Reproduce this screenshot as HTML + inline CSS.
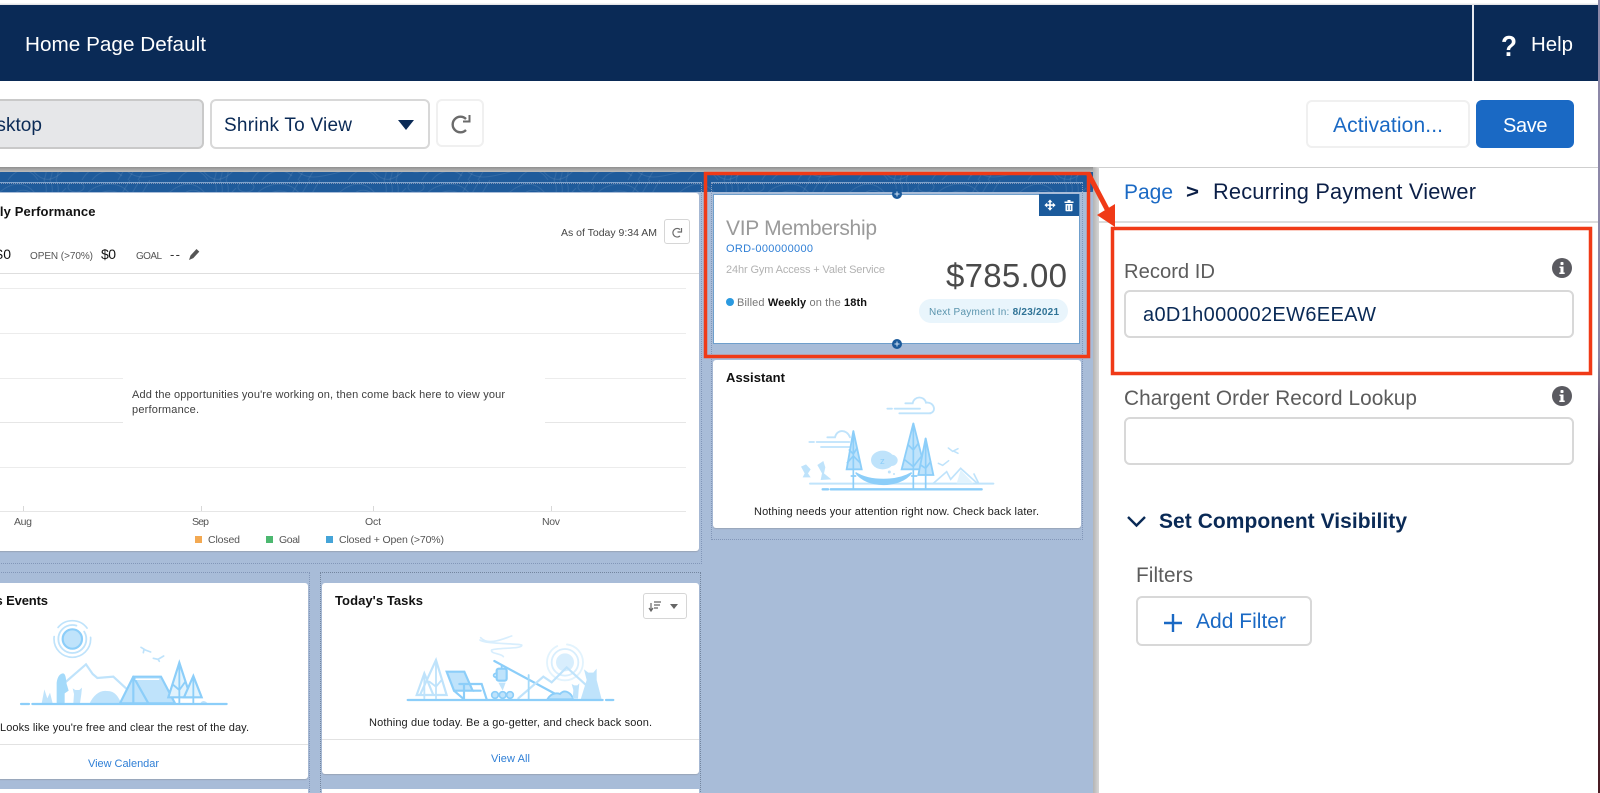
<!DOCTYPE html>
<html lang="en">
<head>
<meta charset="utf-8">
<title>Home Page Default</title>
<style>
html,body{margin:0;padding:0;background:#fff;width:1600px;height:793px;overflow:hidden}
#page{position:relative;width:1600px;height:793px;overflow:hidden;font-family:"Liberation Sans",sans-serif;filter:blur(.3px)}
.b{position:absolute;box-sizing:border-box}
svg{position:absolute;left:0;top:0}
text{font-family:"Liberation Sans",sans-serif}
.n{fill:#0a2a56}.bl{fill:#1a69c4}.g{fill:#5c5c5c}.lk{fill:#2f7fd6}.d{fill:#3f3f3f}.k{fill:#111}
.t{font-weight:700;font-size:13px;fill:#111}
</style>
</head>
<body>
<div id="page">
<!-- chrome -->
<div class="b" style="left:0;top:0;width:1600px;height:5px;background:linear-gradient(#fff 55%,#dcdde0)"></div>
<div class="b" style="left:0;top:5px;width:1598px;height:76px;background:#0a2a56"></div>
<div class="b" style="left:1472px;top:5px;width:2px;height:76px;background:#e6e9ef"></div>

<!-- toolbar -->
<div class="b" style="left:-20px;top:99px;width:224px;height:50px;background:#e6e7e9;border:2px solid #c9c9c9;border-radius:6px"></div>
<div class="b" style="left:210px;top:99px;width:220px;height:50px;background:#fff;border:2px solid #d8d8d8;border-radius:6px"></div>
<div class="b" style="left:436px;top:99px;width:48px;height:48px;background:#fff;border:2px solid #f0f0f0;border-radius:6px"></div>
<div class="b" style="left:1306px;top:100px;width:164px;height:48px;background:#fff;border:2px solid #f0f0f0;border-radius:6px"></div>
<div class="b" style="left:1476px;top:100px;width:98px;height:48px;background:#1a69c4;border-radius:6px"></div>

<!-- canvas -->
<div class="b" style="left:0;top:167px;width:1099px;height:626px;background:#a8bcd8"></div>
<div class="b" style="left:0;top:167px;width:1099px;height:5px;background:linear-gradient(#8f8f8f,#bdbdbd)"></div>
<div class="b" style="left:1093px;top:167px;width:6px;height:626px;background:linear-gradient(90deg,#b4b4b4,#d6d6d6)"></div>
<div class="b" style="left:0;top:172px;width:1093px;height:20px;background:#1f5b9b"></div>

<!-- dotted region outlines -->
<div class="b" style="left:-4px;top:183px;width:706px;height:381px;border:1px dotted #8296b8"></div>
<div class="b" style="left:711px;top:183px;width:372px;height:357px;border:1px dotted #8296b8"></div>
<div class="b" style="left:-4px;top:572px;width:314px;height:240px;border:1px dotted #8296b8"></div>
<div class="b" style="left:320px;top:572px;width:381px;height:240px;border:1px dotted #74869f"></div>

<!-- cards -->
<div class="b" style="left:-4px;top:193px;width:703px;height:358px;background:#fff;border-radius:3px;box-shadow:0 1px 1px #98a4b8"></div>
<div class="b" style="left:664px;top:219px;width:26px;height:25px;background:#fff;border:1px solid #d6d6d6;border-radius:3px"></div>
<div class="b" style="left:0;top:273px;width:699px;height:1px;background:#dedede"></div>
<div class="b" style="left:0;top:288px;width:686px;height:1px;background:#ececec"></div>
<div class="b" style="left:0;top:333px;width:686px;height:1px;background:#ececec"></div>
<div class="b" style="left:0;top:378px;width:123px;height:1px;background:#ececec"></div>
<div class="b" style="left:545px;top:378px;width:141px;height:1px;background:#ececec"></div>
<div class="b" style="left:0;top:422px;width:123px;height:1px;background:#e6e6e6"></div>
<div class="b" style="left:545px;top:422px;width:141px;height:1px;background:#e6e6e6"></div>
<div class="b" style="left:0;top:467px;width:686px;height:1px;background:#ececec"></div>
<div class="b" style="left:0;top:511px;width:686px;height:1px;background:#e6e6e6"></div>
<div class="b" style="left:23px;top:506px;width:1px;height:5px;background:#d8d8d8"></div>
<div class="b" style="left:201px;top:506px;width:1px;height:5px;background:#d8d8d8"></div>
<div class="b" style="left:373px;top:506px;width:1px;height:5px;background:#d8d8d8"></div>
<div class="b" style="left:551px;top:506px;width:1px;height:5px;background:#d8d8d8"></div>
<div class="b" style="left:195px;top:536px;width:7px;height:7px;background:#f3a952"></div>
<div class="b" style="left:266px;top:536px;width:7px;height:7px;background:#4cb870"></div>
<div class="b" style="left:326px;top:536px;width:7px;height:7px;background:#45a4d8"></div>

<div class="b" style="left:-4px;top:583px;width:312px;height:196px;background:#fff;border-radius:3px;box-shadow:0 1px 1px #98a4b8"></div>
<div class="b" style="left:0;top:744px;width:308px;height:1px;background:#e2e2e2"></div>
<div class="b" style="left:322px;top:583px;width:377px;height:191px;background:#fff;border-radius:3px;box-shadow:0 1px 1px #98a4b8"></div>
<div class="b" style="left:322px;top:739px;width:377px;height:1px;background:#e2e2e2"></div>
<div class="b" style="left:643px;top:593px;width:44px;height:26px;background:#fff;border:1px solid #d6d6d6;border-radius:3px"></div>
<div class="b" style="left:-4px;top:789px;width:312px;height:8px;background:#fff"></div>
<div class="b" style="left:322px;top:789px;width:377px;height:8px;background:#fff"></div>

<div class="b" style="left:713px;top:360px;width:368px;height:168px;background:#fff;border-radius:3px;box-shadow:0 1px 1px #98a4b8"></div>

<div class="b" style="left:713px;top:194px;width:367px;height:150px;background:#fff;border:1.5px solid #6f9fcc"></div>
<div class="b" style="left:1039px;top:194px;width:40px;height:22px;background:#1b5a9b"></div>
<div class="b" style="left:919px;top:299px;width:149px;height:24px;background:#e9f5fc;border-radius:12px"></div>
<div class="b" style="left:726px;top:298px;width:8px;height:8px;background:#2b9ae0;border-radius:50%"></div>

<!-- right panel -->
<div class="b" style="left:1099px;top:167px;width:499px;height:626px;background:#fff"></div>
<div class="b" style="left:1099px;top:167px;width:499px;height:1px;background:#cfcfcf"></div>
<div class="b" style="left:1099px;top:221px;width:499px;height:2px;background:#dddddd"></div>
<div class="b" style="left:1124px;top:290px;width:450px;height:48px;background:#fff;border:2px solid #d8d8d8;border-radius:6px"></div>
<div class="b" style="left:1124px;top:417px;width:450px;height:48px;background:#fff;border:2px solid #d8d8d8;border-radius:6px"></div>
<div class="b" style="left:1136px;top:596px;width:176px;height:50px;background:#fff;border:2px solid #d8d8d8;border-radius:6px"></div>
<div class="b" style="left:1552px;top:258px;width:20px;height:20px;background:#5a5a60;border-radius:50%"></div>
<div class="b" style="left:1552px;top:386px;width:20px;height:20px;background:#5a5a60;border-radius:50%"></div>
<div class="b" style="left:1598px;top:0;width:2px;height:793px;background:linear-gradient(#8d88a8 0,#8d88a8 45%,#3a2030 60%,#4a1c24 100%)"></div>

<svg width="1600" height="793" viewBox="0 0 1600 793" xmlns="http://www.w3.org/2000/svg">
<defs>
<pattern id="topo" width="170" height="20" patternUnits="userSpaceOnUse">
<g fill="none" stroke="#fff" stroke-opacity=".09" stroke-width="1">
<path d="M0 12C14 0 26 3 34 12S52 24 66 8"/>
<path d="M8 20C18 6 30 8 38 20"/>
<path d="M44 0c3 6 3 13 0 20M50 0c3 6 3 13 0 20M56 0c3 6 3 13 0 20"/>
<path d="M82 20C92 2 116 0 126 10s22 8 44 2"/>
<path d="M92 20c8-10 22-12 30-4"/>
<path d="M130 0l-12 20M140 0l-12 20M150 0l-12 20"/>
<ellipse cx="76" cy="7" rx="8" ry="5"/>
</g>
</pattern>
</defs>

<rect x="0" y="172" width="1093" height="20" fill="url(#topo)"/>
<rect x="0" y="182" width="702" height="1" fill="#7fa3cc"/>
<rect x="711" y="182" width="372" height="1" fill="#7fa3cc"/>

<!-- header text -->
<text x="25" y="51" font-size="20.7" fill="#fff" textLength="181">Home Page Default</text>
<text x="1501" y="56" font-size="29" font-weight="700" fill="#fff" textLength="16" lengthAdjust="spacingAndGlyphs">?</text>
<text x="1531" y="51" font-size="20.4" fill="#fff" textLength="42">Help</text>

<!-- toolbar text -->
<text x="-28" y="131" font-size="19" class="n" textLength="70">Desktop</text>
<text x="224" y="131" font-size="19" class="n" textLength="128">Shrink To View</text>
<path d="M398 120h16l-8 10z" fill="#0a2a56"/>
<g fill="none" stroke="#6b6b6b">
<path d="M466 119A7.800 7.800 0 1 0 466 130" stroke-width="2.400"/>
<path d="M469.500 115V121.500H463" stroke-width="2"/>
</g>
<text x="1333" y="132" font-size="21" class="bl" textLength="110">Activation...</text>
<text x="1503" y="132" font-size="20" fill="#fff" textLength="44.5">Save</text>

<!-- performance card -->
<text x="-48" y="216" class="t" textLength="143.5">Quarterly Performance</text>
<text x="561" y="236" font-size="10.5" fill="#444" textLength="96">As of Today 9:34 AM</text>
<g fill="none" stroke="#6b6b6b" stroke-width="1.200">
<path d="M680 229.500A4.300 4.300 0 1 0 680 236"/>
<path d="M681.500 228v4h-4"/>
</g>
<text x="-5" y="259" font-size="14" class="k" textLength="16">$0</text>
<text x="30" y="259" font-size="10" fill="#555" textLength="63">OPEN (&gt;70%)</text>
<text x="101" y="259" font-size="14" class="k" textLength="15">$0</text>
<text x="136" y="259" font-size="10" fill="#555" textLength="26">GOAL</text>
<text x="170" y="259" font-size="13" fill="#333" textLength="10">--</text>
<path d="M189 260l1.500-4.500 6-6.500 2.800 2.600-6 6.500z" fill="#555"/>
<text x="132" y="398" font-size="11" class="d" textLength="373">Add the opportunities you're working on, then come back here to view your</text>
<text x="132" y="413" font-size="11" class="d" textLength="67">performance.</text>
<g font-size="10.5" fill="#555">
<text x="14" y="525" textLength="18">Aug</text>
<text x="192" y="525" textLength="17">Sep</text>
<text x="365" y="525" textLength="16">Oct</text>
<text x="542" y="525" textLength="18">Nov</text>
<text x="208" y="543" textLength="32">Closed</text>
<text x="279" y="543" textLength="21">Goal</text>
<text x="339" y="543" textLength="105">Closed + Open (&gt;70%)</text>
</g>

<!-- VIP card -->
<text x="726" y="235" font-size="21" fill="#9a9a9a" textLength="151">VIP Membership</text>
<text x="726" y="252" font-size="11" class="lk" textLength="87">ORD-000000000</text>
<text x="726" y="273" font-size="11" fill="#b2b2b2" textLength="159">24hr Gym Access + Valet Service</text>
<text x="946" y="287" font-size="33" fill="#4a4a4a" textLength="121">$785.00</text>
<text x="737" y="306" font-size="11" fill="#777" textLength="130">Billed <tspan font-weight="700" fill="#111">Weekly</tspan> on the <tspan font-weight="700" fill="#111">18th</tspan></text>
<text x="929" y="315" font-size="10" fill="#5a94ad" textLength="130">Next Payment In: <tspan font-weight="700" fill="#2f7396">8/23/2021</tspan></text>
<circle cx="897" cy="194" r="5" fill="#1b5a9b"/>
<circle cx="897" cy="344" r="5" fill="#1b5a9b"/>
<path d="M894.500 194h5M897 191.500v5M894.500 344h5M897 341.500v5" stroke="#cfe0f2" stroke-width="1"/>
<path d="M1050 199.500l2.500 2.800h-1.700v2h2v-1.700l2.800 2.500-2.800 2.500v-1.700h-2v2h1.700l-2.500 2.800-2.500-2.800h1.700v-2h-2v1.700l-2.800-2.500 2.800-2.500v1.700h2v-2h-1.700z" fill="#fff"/>
<path d="M1064.500 201.500h9v1.500h-9zM1067.500 200h3v1.500h-3zM1065.500 204h7v6.500a.8.8 0 0 1-.8.800h-5.400a.8.8 0 0 1-.8-.800z" fill="#fff"/>
<path d="M1067.700 205.500v4.500M1070.300 205.500v4.500" stroke="#1b5a9b" stroke-width=".8"/>

<!-- Assistant -->
<text x="726" y="382" class="t" textLength="59">Assistant</text>
<text x="754" y="515" font-size="11" fill="#222" textLength="285">Nothing needs your attention right now. Check back later.</text>
<g transform="translate(690 350) scale(.33333)" fill="none" stroke="#8ccef9" stroke-linecap="round">
  <path d="M360 401H910" stroke="#c0e4fb" stroke-width="6"/>
  <path d="M398 418H414M422 418H875" stroke-width="7"/>
  <path d="M592 176H606M614 176H690M628 190H722M646 160H668C672 138 702 136 708 158C734 154 742 190 716 190" stroke="#bfe3fb" stroke-width="5.500"/>
  <path d="M358 276H372M380 276H478M393 291H480M412 262H435C440 238 470 236 480 262" stroke="#bfe3fb" stroke-width="5.500"/>
  <path d="M490 243L470 358H515Z" fill="#bfe3fb" stroke-width="5.500"/>
  <path d="M490 243V416M472 338L490 318L510 338M478 300L490 312L500 296" stroke-width="5"/>
  <path d="M670 220L635 358H705Z" fill="#bfe3fb" stroke-width="5.500"/>
  <path d="M670 220V416M645 330L670 350L695 318M655 285L670 300L685 280" stroke-width="5"/>
  <path d="M707 265L685 375H730Z" fill="#bfe3fb" stroke-width="5.500"/>
  <path d="M707 265V416M692 345L707 355L722 335" stroke-width="5"/>
  <path d="M484 378H497M665 378H680" stroke-width="5"/>
  <path d="M497 368C530 415 630 415 665 368C620 395 540 395 497 368Z" fill="#8ccef9" stroke-width="4"/>
  <ellipse cx="578" cy="330" rx="35" ry="28" fill="#bfe3fb" stroke="none"/>
  <ellipse cx="604" cy="331" rx="19" ry="17" fill="#bfe3fb" stroke="none"/>
  <circle cx="598" cy="366" r="4.500" fill="#bfe3fb" stroke="none"/>
  <circle cx="612" cy="372" r="3" fill="#bfe3fb" stroke="none"/>
  <path d="M333 350L348 343L362 358L354 370L362 382L338 382L344 370Z" fill="#bfe3fb" stroke="none"/>
  <path d="M382 345L400 333L406 352L402 370L424 388L392 390L396 370Z" fill="#bfe3fb" stroke="none"/>
  <path d="M775 294L788 304L804 296M792 304L804 310" stroke="#bfe3fb" stroke-width="4.500"/>
  <path d="M745 340L758 346L776 332" stroke="#bfe3fb" stroke-width="4.500"/>
  <path d="M800 400L812 360L850 400Z" fill="#e2f3fd" stroke="none"/>
  <path d="M730 400L770 365L782 388L812 355L862 400M852 372L866 400" stroke="#bfe3fb" stroke-width="5"/>
</g>
<text x="880" y="464" font-size="9.500" fill="#8ccef9">z</text>

<!-- Events -->
<text x="-44" y="605" class="t" textLength="92">Today's Events</text>
<g transform="translate(0 560) scale(.33333)" fill="none" stroke="#8ccef9" stroke-linecap="round">
  <circle cx="217" cy="237" r="29" fill="#bfe3fb" stroke-width="6.500"/>
  <circle cx="217" cy="237" r="42" stroke="#bfe3fb" stroke-width="5.500" stroke-dasharray="210 30"/>
  <circle cx="217" cy="237" r="55" stroke="#bfe3fb" stroke-width="5" stroke-dasharray="180 30 100 30"/>
  <path d="M190 372L258 313L278 342L292 354L340 350L378 385" stroke="#bfe3fb" stroke-width="6.500"/>
  <path d="M125 430L133 388L142 415L150 398L158 430Z" fill="#bfe3fb" stroke="none"/>
  <path d="M170 430V368C172 350 180 340 190 340C198 342 198 360 200 372L206 392L194 400V430Z" fill="#a4dafa" stroke="none"/>
  <path d="M218 385L226 390L238 390L246 383L244 402L240 430H220L222 402Z" fill="#bfe3fb" stroke="none"/>
  <path d="M268 432C280 405 300 390 320 393C345 392 355 410 365 432Z" fill="#bfe3fb" stroke="none"/>
  <path d="M400 350L360 430H525L483 350Z" fill="#bfe3fb" stroke-width="6.500"/>
  <path d="M400 350L445 430M400 350V430" stroke-width="6.500"/>
  <path d="M408 358H476" stroke="#fff" stroke-width="4"/>
  <path d="M538 308L505 412H572Z" fill="#e2f3fd" stroke-width="6.500"/>
  <path d="M538 308V430M520 375L538 390L556 365" stroke-width="5.500"/>
  <path d="M580 348L552 412H605Z" fill="#e2f3fd" stroke-width="6.500"/>
  <path d="M580 348V430" stroke-width="5.500"/>
  <path d="M600 432C605 420 615 420 625 432Z" fill="#bfe3fb" stroke="none"/>
  <path d="M97 432H680M63 432H87" stroke-width="6.500"/>
  <path d="M423 262L436 270L452 276M432 268L430 278" stroke="#bfe3fb" stroke-width="5"/>
  <path d="M460 295L474 298L491 288M474 298L478 304" stroke="#bfe3fb" stroke-width="5"/>
</g>
<text x="0" y="731" font-size="11" fill="#222" textLength="249">Looks like you're free and clear the rest of the day.</text>
<text x="88" y="767" font-size="11" class="lk" textLength="71">View Calendar</text>

<!-- Tasks -->
<text x="335" y="605" class="t" textLength="88">Today's Tasks</text>
<path d="M651 603v7M649 608l2 3 2-3" fill="none" stroke="#666" stroke-width="1.200"/>
<path d="M654 602h7M654 605h6M654 608h4" stroke="#666" stroke-width="1.200"/>
<path d="M670 604h8l-4 5z" fill="#666"/>
<g transform="translate(310 560) scale(.33333)" fill="none" stroke="#8ccef9" stroke-linecap="round">
  <path d="M378 300L330 405H410Z M343 340L320 405H370Z" fill="#fff" stroke="#bfe3fb" stroke-width="6.500"/>
  <path d="M378 300V415M343 340V415M358 365L378 380L395 360" stroke="#bfe3fb" stroke-width="5.500"/>
  <path d="M512 233C535 260 590 232 605 228M510 240C520 252 620 250 635 255C640 268 560 262 545 270C540 282 575 280 580 290" stroke="#d8eefd" stroke-width="5"/>
  <path d="M410 335H463L488 392H432Z" fill="#bfe3fb" stroke-width="6.500"/>
  <path d="M448 372H515L530 418M432 392L462 418M490 392H512M462 372V418" stroke-width="6.500"/>
  <path d="M553 303L742 405" stroke-width="6.500"/>
  <path d="M575 316V328" stroke-width="5.500"/>
  <rect x="560" y="326" width="30" height="36" rx="6" fill="#bfe3fb" stroke-width="6.500"/>
  <path d="M560 340C548 340 548 352 560 352" stroke-width="5.500"/>
  <path d="M565 368H587L578 392Z" fill="#bfe3fb" stroke="none"/>
  <circle cx="555" cy="405" r="10" fill="#bfe3fb" stroke-width="5"/>
  <circle cx="578" cy="405" r="10" fill="#bfe3fb" stroke-width="5"/>
  <circle cx="600" cy="405" r="10" fill="#bfe3fb" stroke-width="5"/>
  <circle cx="765" cy="307" r="27" fill="#d8eefd" stroke="none"/>
  <circle cx="765" cy="307" r="40" stroke="#d8eefd" stroke-width="5.500"/>
  <circle cx="765" cy="307" r="54" stroke="#e2f3fd" stroke-width="5.500" stroke-dasharray="230 30"/>
  <path d="M625 415L700 350L725 367L770 322L850 395" stroke="#bfe3fb" stroke-width="6.500"/>
  <path d="M656 345V416" stroke="#a4dafa" stroke-width="5.500"/>
  <path d="M712 418C725 395 745 400 750 402C765 385 785 400 790 418Z" fill="#bfe3fb" stroke-width="5.500"/>
  <path d="M785 372L793 376L802 376L808 370L806 390L804 416H788L790 390Z" fill="#bfe3fb" stroke="none"/>
  <path d="M822 328L835 338H850L860 326V360L875 418H812L830 360Z" fill="#bfe3fb" stroke="none"/>
  <path d="M293 420H878M888 420H910" stroke-width="6.500"/>
</g>
<text x="369" y="726" font-size="11" fill="#222" textLength="283">Nothing due today. Be a go-getter, and check back soon.</text>
<text x="491" y="762" font-size="11" class="lk" textLength="39">View All</text>

<!-- Right panel text -->
<text x="1124" y="199" font-size="21" class="bl" textLength="49">Page</text>
<text x="1186" y="198" font-size="19" font-weight="700" fill="#0b1f47" textLength="13" lengthAdjust="spacingAndGlyphs">&gt;</text>
<text x="1213" y="199" font-size="21.800" fill="#0b1f47" textLength="263">Recurring Payment Viewer</text>
<text x="1124" y="278" font-size="20.200" class="g" textLength="91">Record ID</text>
<text x="1143" y="321" font-size="20" class="n" textLength="233">a0D1h000002EW6EEAW</text>
<text x="1124" y="405" font-size="20.800" class="g" textLength="293">Chargent Order Record Lookup</text>
<path d="M1128 517L1136.500 525.500L1145 517" fill="none" stroke="#0a2a56" stroke-width="2.400"/>
<text x="1159" y="528" font-size="21" font-weight="700" class="n" textLength="248">Set Component Visibility</text>
<text x="1136" y="582" font-size="20.800" class="g" textLength="57">Filters</text>
<path d="M1173 614V632M1164 623H1182" stroke="#1a69c4" stroke-width="2.400"/>
<text x="1196" y="628" font-size="21" class="bl" textLength="90">Add Filter</text>
<g fill="#fff">
<rect x="1560.500" y="262" width="3" height="3" rx=".8"/>
<path d="M1559.500 266.500h4v6h1.200v1.500h-5.400v-1.500h1.200v-4.500h-1z"/>
<rect x="1560.500" y="390" width="3" height="3" rx=".8"/>
<path d="M1559.500 394.500h4v6h1.200v1.500h-5.400v-1.500h1.200v-4.500h-1z"/>
</g>

<!-- red annotations -->
<rect x="705.500" y="173.500" width="383" height="183" fill="none" stroke="#f03a17" stroke-width="3.500"/>
<path d="M1088 173L1109 213" stroke="#f03a17" stroke-width="5" fill="none"/>
<path d="M1115 204L1097 215L1115 227Z" fill="#f03a17"/>
<rect x="1112.500" y="228.500" width="478" height="145" fill="none" stroke="#f03a17" stroke-width="3.500"/>
</svg>
</div>
</body>
</html>
